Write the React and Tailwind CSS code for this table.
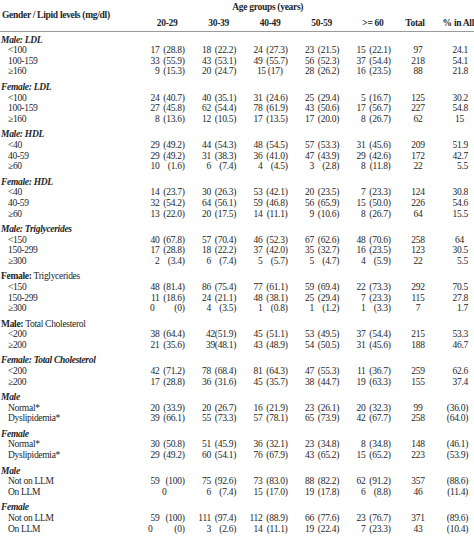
import React from 'react';

// one grid template shared by header and every data row
const GRID = 'grid grid-cols-[133px_repeat(5,51.5px)_55px_28.5px]';

const bi = (t) => <span className="font-bold italic">{t}</span>;
const b = (t) => <span className="font-bold">{t}</span>;

// cells: "n (p)" strings, or objects for the odd hand-set ones
const groups = [
  { title: bi('Male: LDL'), rows: [
    ['<100', '17 (28.8)', '18 (22.2)', '24 (27.3)', '23 (21.5)', '15 (22.1)', '97', '24.1'],
    ['100-159', '33 (55.9)', '43 (53.1)', '49 (55.7)', '56 (52.3)', '37 (54.4)', '218', '54.1'],
    ['≥160', '9 (15.3)', '20 (24.7)', { raw: '15 (17)', cls: 'pr-[5px]' }, '28 (26.2)', '16 (23.5)', '88', '21.8'],
  ] },
  { title: bi('Female: LDL'), rows: [
    ['<100', '24 (40.7)', '40 (35.1)', '31 (24.6)', '25 (29.4)', '5 (16.7)', '125', '30.2'],
    ['100-159', '27 (45.8)', '62 (54.4)', '78 (61.9)', '43 (50.6)', '17 (56.7)', '227', '54.8'],
    ['≥160', '8 (13.6)', '12 (10.5)', '17 (13.5)', '17 (20.0)', '8 (26.7)', '62', '15'],
  ] },
  { title: bi('Male: HDL'), rows: [
    ['<40', '29 (49.2)', '44 (54.3)', '48 (54.5)', '57 (53.3)', '31 (45.6)', '209', '51.9'],
    ['40-59', '29 (49.2)', '31 (38.3)', '36 (41.0)', '47 (43.9)', '29 (42.6)', '172', '42.7'],
    ['≥60', '10 (1.6)', '6 (7.4)', '4 (4.5)', '3 (2.8)', '8 (11.8)', '22', '5.5'],
  ] },
  { title: bi('Female: HDL'), rows: [
    ['<40', '14 (23.7)', '30 (26.3)', '53 (42.1)', '20 (23.5)', '7 (23.3)', '124', '30.8'],
    ['40-59', '32 (54.2)', '64 (56.1)', '59 (46.8)', '56 (65.9)', '15 (50.0)', '226', '54.6'],
    ['≥60', '13 (22.0)', '20 (17.5)', '14 (11.1)', '9 (10.6)', '8 (26.7)', '64', '15.5'],
  ] },
  { title: bi('Male: Triglycerides'), rows: [
    ['<150', '40 (67.8)', '57 (70.4)', '46 (52.3)', '67 (62.6)', '48 (70.6)', '258', '64'],
    ['150-299', '17 (28.8)', '18 (22.2)', '37 (42.0)', '35 (32.7)', '16 (23.5)', '123', '30.5'],
    ['≥300', '2 (3.4)', '6 (7.4)', '5 (5.7)', '5 (4.7)', '4 (5.9)', '22', '5.5'],
  ] },
  { title: <>{b('Female:')} Triglycerides</>, rows: [
    ['<150', '48 (81.4)', '86 (75.4)', '77 (61.1)', '59 (69.4)', '22 (73.3)', '292', '70.5'],
    ['150-299', '11 (18.6)', '24 (21.1)', '48 (38.1)', '25 (29.4)', '7 (23.3)', '115', '27.8'],
    ['≥300', { c: '0', p: '(0)', cls: 'pr-[5px]' }, '4 (3.5)', '1 (0.8)', '1 (1.2)', '1 (3.3)', '7', '1.7'],
  ] },
  { title: <>{b('Male:')} Total Cholesterol</>, rows: [
    ['<200', '38 (64.4)', { raw: '42(51.9)' }, '45 (51.1)', '53 (49.5)', '37 (54.4)', '215', '53.3'],
    ['≥200', '21 (35.6)', { raw: '39(48.1)' }, '43 (48.9)', '54 (50.5)', '31 (45.6)', '188', '46.7'],
  ] },
  { title: bi('Female: Total Cholesterol'), rows: [
    ['<200', '42 (71.2)', '78 (68.4)', '81 (64.3)', '47 (55.3)', '11 (36.7)', '259', '62.6'],
    ['≥200', '17 (28.8)', '36 (31.6)', '45 (35.7)', '38 (44.7)', '19 (63.3)', '155', '37.4'],
  ] },
  { title: bi('Male'), rows: [
    ['Normal*', '20 (33.9)', '20 (26.7)', '16 (21.9)', '23 (26.1)', '20 (32.3)', '99', '(36.0)'],
    ['Dyslipidemia*', '39 (66.1)', '55 (73.3)', '57 (78.1)', '65 (73.9)', '42 (67.7)', '258', '(64.0)'],
  ] },
  { title: bi('Female'), rows: [
    ['Normal*', '30 (50.8)', '51 (45.9)', '36 (32.1)', '23 (34.8)', '8 (34.8)', '148', '(46.1)'],
    ['Dyslipidemia*', '29 (49.2)', '60 (54.1)', '76 (67.9)', '43 (65.2)', '15 (65.2)', '223', '(53.9)'],
  ] },
  { title: bi('Male'), rows: [
    ['Not on LLM', '59 (100)', '75 (92.6)', '73 (83.0)', '88 (82.2)', '62 (91.2)', '357', '(88.6)'],
    ['On LLM', { raw: '0', cls: 'pr-[18px]' }, '6 (7.4)', '15 (17.0)', '19 (17.8)', '6 (8.8)', '46', '(11.4)'],
  ] },
  { title: bi('Female'), rows: [
    ['Not on LLM', '59 (100)', '111 (97.4)', '112 (88.9)', '66 (77.6)', '23 (76.7)', '371', '(89.6)'],
    ['On LLM', { c: '0', p: '(0)', cls: 'pr-[7px]' }, '3 (2.6)', '14 (11.1)', '19 (22.4)', '7 (23.3)', '43', '(10.4)'],
  ] },
];

function AgeCell({ v }) {
  if (typeof v === 'object' && v.raw) {
    return <div className={`text-right whitespace-nowrap ${v.cls || ''}`}>{v.raw}</div>;
  }
  let c, p, cls = '';
  if (typeof v === 'object') {
    ({ c, p } = v);
    cls = v.cls || '';
  } else {
    [c, p] = v.split(' ');
  }
  return (
    <div className="flex justify-end whitespace-nowrap">
      <span className={`text-right ${cls}`}>{c}</span>
      <span className="w-[25px] text-right">{p}</span>
    </div>
  );
}

function Row({ r }) {
  const [label, a, bb, c, d, e, total, pct] = r;
  const bare = !pct.includes('.') && !pct.includes('(');
  return (
    <div className={`${GRID} h-[10.65px] leading-[10.65px]`}>
      <div className="pl-[8px] whitespace-nowrap">{label}</div>
      {[a, bb, c, d, e].map((v, i) => <AgeCell key={i} v={v} />)}
      <div className="text-center">{total}</div>
      <div className={`text-right whitespace-nowrap ${bare ? 'pr-[10px]' : 'pr-[6px]'}`}>{pct}</div>
    </div>
  );
}

export default function App() {
  const ages = ['20-29', '30-39', '40-49', '50-59', '>= 60'];
  return (
    <div className="w-[474px] h-[540px] overflow-hidden bg-white text-[#262626] text-[9.5px] tracking-[-0.3px] font-['Liberation_Serif','Times_New_Roman',serif]">
      {/* Header */}
      <div className={`${GRID} grid-rows-[11px_11px] gap-y-[5px] pt-[2px] pb-[2px] border-b border-[#9a9a9a] font-bold leading-[11px]`}>
        <div className="row-span-2 self-center pl-[2px] whitespace-nowrap">Gender / Lipid levels (mg/dl)</div>
        <div className="col-span-5 text-center pl-[12px]">Age groups (years)</div>
        <div className="col-span-2" />
        {ages.map(a => (
          <div key={a} className="text-right pr-[7px] whitespace-nowrap">{a}</div>
        ))}
        <div className="text-center pr-[6px]">Total</div>
        <div className="flex justify-end whitespace-nowrap">
          <span className="shrink-0">% in All</span>
        </div>
      </div>

      {/* Body */}
      <div className="pt-[2.5px]">
        {groups.map((g, gi) => (
          <div key={gi} className={gi ? 'pt-[4.8px]' : ''}>
            <div className="h-[10.65px] leading-[10.65px] pl-[1px] whitespace-nowrap">{g.title}</div>
            {g.rows.map((r, ri) => <Row key={ri} r={r} />)}
          </div>
        ))}
      </div>
    </div>
  );
}
